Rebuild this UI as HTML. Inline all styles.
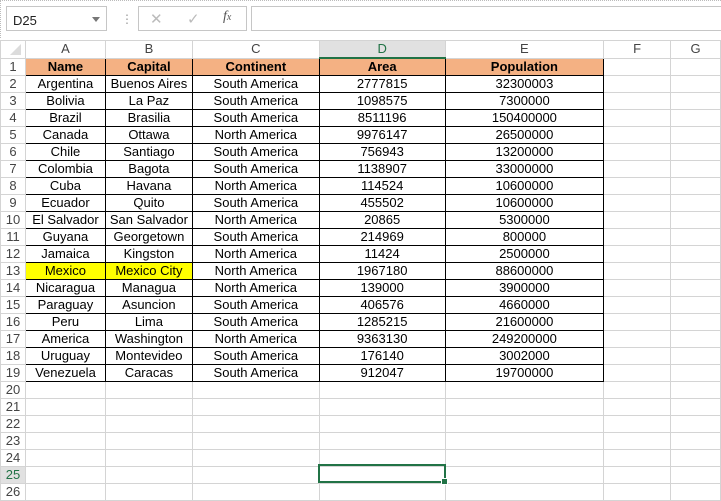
<!DOCTYPE html><html><head><style>
body{margin:0;width:721px;height:500px;overflow:hidden;background:#fff;font-family:"Liberation Sans",Arial,sans-serif;position:relative}
.top{position:absolute;left:0;top:0;width:721px;height:38px;background:#fff;border-top:1px dotted #bbb;border-left:1px dotted #bbb;box-sizing:border-box}
.nb{position:absolute;left:5px;top:5px;width:101px;height:25px;border:1px solid #c6c6c6;box-sizing:border-box;font-size:13px;padding:6px 0 0 6px;color:#222}
.nb:after{content:"";position:absolute;right:6px;top:10px;border:4px solid transparent;border-top:5px solid #777}
.fx{position:absolute;left:137px;top:5px;width:109px;height:25px;border:1px solid #c6c6c6;box-sizing:border-box;color:#bbb;font-size:15px}
.fi{position:absolute;left:250px;top:5px;width:475px;height:25px;border:1px solid #c6c6c6;box-sizing:border-box}
table{position:absolute;left:0;top:40px;border-collapse:collapse;table-layout:fixed;font-size:13px}
td{height:16px;padding:0;border:1px solid #d4d4d4;text-align:center;white-space:nowrap;overflow:hidden;line-height:16px;color:#000}
tr.h td{background:#fff;color:#444;font-size:13px;border-color:#d4d4d4}
td.r{background:#fff;color:#444;text-align:center}
.d td.c{border:1px solid #000}
.hd td.c{background:#f4b183;font-weight:bold;border:1px solid #000}
td.y{background:#ffff00!important}
.sel{position:absolute;left:318px;top:464px;width:128px;height:19px;border:2px solid #217346;box-sizing:border-box}
.sel:after{content:"";position:absolute;right:-4px;bottom:-4px;width:5px;height:5px;background:#217346;border:1px solid #fff}
.tri{position:absolute;left:10px;top:44px;width:0;height:0;border-left:11px solid transparent;border-bottom:11px solid #dcdcdc}
</style></head><body>
<div class="top"><div class="nb">D25</div><div style="position:absolute;left:120px;top:11px;color:#999;font-size:12px">⋮</div>
<div class="fx"><span style="position:absolute;left:11px;top:3px">✕</span><span style="position:absolute;left:48px;top:3px">✓</span><span style="position:absolute;left:84px;top:2px;color:#555;font-family:'Liberation Serif';font-style:italic;font-size:14px">f<span style="font-size:10px">x</span></span></div>
<div class="fi"></div></div>
<table>
<colgroup><col style="width:25px"><col style="width:80px"><col style="width:87px"><col style="width:127px"><col style="width:126px"><col style="width:159px"><col style="width:67px"><col style="width:50px"></colgroup>
<tr class="h"><td></td><td>A</td><td>B</td><td>C</td><td style="background:#e1e1e1;color:#217346;border-bottom:2px solid #217346">D</td><td>E</td><td>F</td><td>G</td></tr>
<tr class="hd"><td class="r">1</td><td class="c">Name</td><td class="c">Capital</td><td class="c">Continent</td><td class="c">Area</td><td class="c">Population</td><td></td><td></td></tr>
<tr class="d"><td class="r">2</td><td class="c">Argentina</td><td class="c">Buenos Aires</td><td class="c">South America</td><td class="c">2777815</td><td class="c">32300003</td><td></td><td></td></tr>
<tr class="d"><td class="r">3</td><td class="c">Bolivia</td><td class="c">La Paz</td><td class="c">South America</td><td class="c">1098575</td><td class="c">7300000</td><td></td><td></td></tr>
<tr class="d"><td class="r">4</td><td class="c">Brazil</td><td class="c">Brasilia</td><td class="c">South America</td><td class="c">8511196</td><td class="c">150400000</td><td></td><td></td></tr>
<tr class="d"><td class="r">5</td><td class="c">Canada</td><td class="c">Ottawa</td><td class="c">North America</td><td class="c">9976147</td><td class="c">26500000</td><td></td><td></td></tr>
<tr class="d"><td class="r">6</td><td class="c">Chile</td><td class="c">Santiago</td><td class="c">South America</td><td class="c">756943</td><td class="c">13200000</td><td></td><td></td></tr>
<tr class="d"><td class="r">7</td><td class="c">Colombia</td><td class="c">Bagota</td><td class="c">South America</td><td class="c">1138907</td><td class="c">33000000</td><td></td><td></td></tr>
<tr class="d"><td class="r">8</td><td class="c">Cuba</td><td class="c">Havana</td><td class="c">North America</td><td class="c">114524</td><td class="c">10600000</td><td></td><td></td></tr>
<tr class="d"><td class="r">9</td><td class="c">Ecuador</td><td class="c">Quito</td><td class="c">South America</td><td class="c">455502</td><td class="c">10600000</td><td></td><td></td></tr>
<tr class="d"><td class="r">10</td><td class="c">El Salvador</td><td class="c">San Salvador</td><td class="c">North America</td><td class="c">20865</td><td class="c">5300000</td><td></td><td></td></tr>
<tr class="d"><td class="r">11</td><td class="c">Guyana</td><td class="c">Georgetown</td><td class="c">South America</td><td class="c">214969</td><td class="c">800000</td><td></td><td></td></tr>
<tr class="d"><td class="r">12</td><td class="c">Jamaica</td><td class="c">Kingston</td><td class="c">North America</td><td class="c">11424</td><td class="c">2500000</td><td></td><td></td></tr>
<tr class="d"><td class="r">13</td><td class="c y">Mexico</td><td class="c y">Mexico City</td><td class="c">North America</td><td class="c">1967180</td><td class="c">88600000</td><td></td><td></td></tr>
<tr class="d"><td class="r">14</td><td class="c">Nicaragua</td><td class="c">Managua</td><td class="c">North America</td><td class="c">139000</td><td class="c">3900000</td><td></td><td></td></tr>
<tr class="d"><td class="r">15</td><td class="c">Paraguay</td><td class="c">Asuncion</td><td class="c">South America</td><td class="c">406576</td><td class="c">4660000</td><td></td><td></td></tr>
<tr class="d"><td class="r">16</td><td class="c">Peru</td><td class="c">Lima</td><td class="c">South America</td><td class="c">1285215</td><td class="c">21600000</td><td></td><td></td></tr>
<tr class="d"><td class="r">17</td><td class="c">America</td><td class="c">Washington</td><td class="c">North America</td><td class="c">9363130</td><td class="c">249200000</td><td></td><td></td></tr>
<tr class="d"><td class="r">18</td><td class="c">Uruguay</td><td class="c">Montevideo</td><td class="c">South America</td><td class="c">176140</td><td class="c">3002000</td><td></td><td></td></tr>
<tr class="d"><td class="r">19</td><td class="c">Venezuela</td><td class="c">Caracas</td><td class="c">South America</td><td class="c">912047</td><td class="c">19700000</td><td></td><td></td></tr>
<tr><td class="r">20</td><td></td><td></td><td></td><td></td><td></td><td></td><td></td></tr>
<tr><td class="r">21</td><td></td><td></td><td></td><td></td><td></td><td></td><td></td></tr>
<tr><td class="r">22</td><td></td><td></td><td></td><td></td><td></td><td></td><td></td></tr>
<tr><td class="r">23</td><td></td><td></td><td></td><td></td><td></td><td></td><td></td></tr>
<tr><td class="r">24</td><td></td><td></td><td></td><td></td><td></td><td></td><td></td></tr>
<tr><td class="r" style="color:#217346;background:#e1e1e1">25</td><td></td><td></td><td></td><td></td><td></td><td></td><td></td></tr>
<tr><td class="r">26</td><td></td><td></td><td></td><td></td><td></td><td></td><td></td></tr>
</table>
<div class="tri"></div>
<div class="sel"></div>
</body></html>
